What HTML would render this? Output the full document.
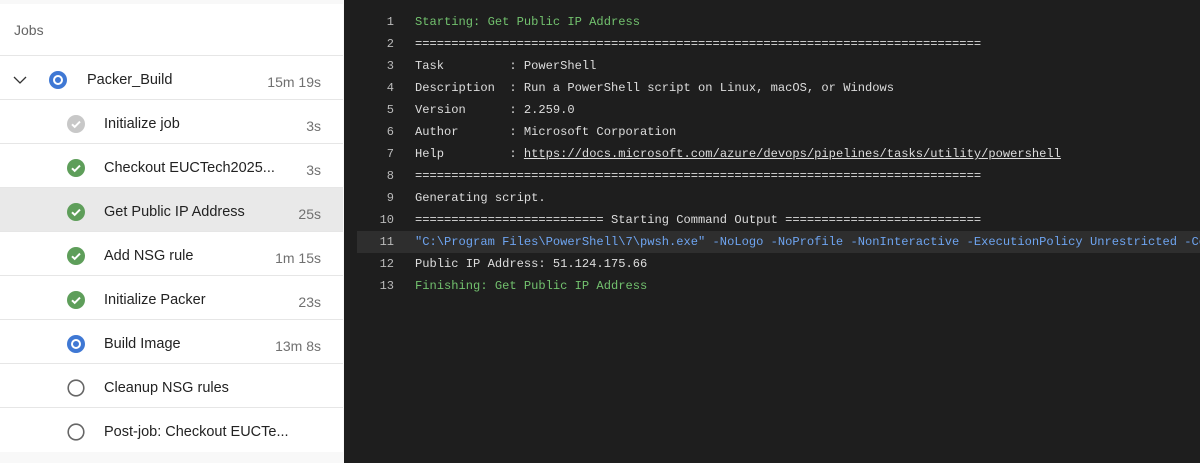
<!DOCTYPE html>
<html><head><style>
*{margin:0;padding:0;box-sizing:border-box}
body{width:1200px;height:463px;overflow:hidden;background:#1e1e1e;font-family:"Liberation Sans",sans-serif;position:relative}
#left{position:absolute;left:0;top:0;width:344px;height:463px;background:#f8f8f8}
#panel{position:absolute;left:0;top:4px;width:343px;height:448px;background:#fff}
.hdr{position:absolute;left:14px;top:18px;font-size:14px;color:#666}
.row{position:absolute;left:0;width:343px;height:44px;border-top:1px solid #e6e6e6}
.row .t{position:absolute;top:16px;font-size:14.5px;color:#222;white-space:nowrap}
.row .d{position:absolute;right:22px;top:18px;font-size:14px;color:#707070}
.ic{position:absolute;top:15px;width:18px;height:18px}
#code{position:absolute;left:344px;top:0;width:856px;height:463px;font-family:"Liberation Mono",monospace;font-size:12.1px;color:#ddd}
.l{position:absolute;left:0;height:22px;line-height:22px;width:856px;white-space:pre}
.n{position:absolute;width:50px;text-align:right;color:#bbb;font-size:12px}
.c{position:absolute;left:71px}
.g{color:#72c16e}.b{color:#6ea4f0}
</style></head><body>
<div id="left"><div id="panel">
<div class="hdr">Jobs</div>
</div></div>
<div style="position:absolute;left:0;top:55px">
<div class="row" style="top:0">
<svg class="ic" style="left:13px;top:18px;width:14px;height:12px" viewBox="0 0 14 12"><path d="M1 3l6 6 6-6" stroke="#333" stroke-width="1.3" fill="none"/></svg>
<svg class="ic" style="left:49px" viewBox="0 0 18 18"><circle cx="9" cy="9" r="9" fill="#3f78d4"/><circle cx="9" cy="9" r="4" stroke="#fff" stroke-width="2" fill="none"/></svg>
<span class="t" style="left:87px">Packer_Build</span><span class="d">15m 19s</span></div>
<div class="row" style="top:44px"><svg class="ic" style="left:67px" viewBox="0 0 18 18"><circle cx="9" cy="9" r="9" fill="#c8c8c8"/><path d="M5 9.3l2.7 2.6L13 6.6" stroke="#fff" stroke-width="2" fill="none"/></svg><span class="t" style="left:104px">Initialize job</span><span class="d">3s</span></div>
<div class="row" style="top:88px"><svg class="ic" style="left:67px" viewBox="0 0 18 18"><circle cx="9" cy="9" r="9" fill="#5e9e5a"/><path d="M5 9.3l2.7 2.6L13 6.6" stroke="#fff" stroke-width="2" fill="none"/></svg><span class="t" style="left:104px">Checkout EUCTech2025...</span><span class="d">3s</span></div>
<div class="row" style="top:132px;background:#e9e9e9"><svg class="ic" style="left:67px" viewBox="0 0 18 18"><circle cx="9" cy="9" r="9" fill="#5e9e5a"/><path d="M5 9.3l2.7 2.6L13 6.6" stroke="#fff" stroke-width="2" fill="none"/></svg><span class="t" style="left:104px">Get Public IP Address</span><span class="d">25s</span></div>
<div class="row" style="top:176px"><svg class="ic" style="left:67px" viewBox="0 0 18 18"><circle cx="9" cy="9" r="9" fill="#5e9e5a"/><path d="M5 9.3l2.7 2.6L13 6.6" stroke="#fff" stroke-width="2" fill="none"/></svg><span class="t" style="left:104px">Add NSG rule</span><span class="d">1m 15s</span></div>
<div class="row" style="top:220px"><svg class="ic" style="left:67px" viewBox="0 0 18 18"><circle cx="9" cy="9" r="9" fill="#5e9e5a"/><path d="M5 9.3l2.7 2.6L13 6.6" stroke="#fff" stroke-width="2" fill="none"/></svg><span class="t" style="left:104px">Initialize Packer</span><span class="d">23s</span></div>
<div class="row" style="top:264px"><svg class="ic" style="left:67px" viewBox="0 0 18 18"><circle cx="9" cy="9" r="9" fill="#3f78d4"/><circle cx="9" cy="9" r="4" stroke="#fff" stroke-width="2" fill="none"/></svg><span class="t" style="left:104px">Build Image</span><span class="d">13m 8s</span></div>
<div class="row" style="top:308px"><svg class="ic" style="left:67px" viewBox="0 0 18 18"><circle cx="9" cy="9" r="7.8" stroke="#666" stroke-width="1.6" fill="none"/></svg><span class="t" style="left:104px">Cleanup NSG rules</span></div>
<div class="row" style="top:352px"><svg class="ic" style="left:67px" viewBox="0 0 18 18"><circle cx="9" cy="9" r="7.8" stroke="#666" stroke-width="1.6" fill="none"/></svg><span class="t" style="left:104px">Post-job: Checkout EUCTe...</span></div>
</div>
<div id="code">
<div class="l" style="top:11px"><span class="n">1</span><span class="c g">Starting: Get Public IP Address</span></div>
<div class="l" style="top:33px"><span class="n">2</span><span class="c">==============================================================================</span></div>
<div class="l" style="top:55px"><span class="n">3</span><span class="c">Task         : PowerShell</span></div>
<div class="l" style="top:77px"><span class="n">4</span><span class="c">Description  : Run a PowerShell script on Linux, macOS, or Windows</span></div>
<div class="l" style="top:99px"><span class="n">5</span><span class="c">Version      : 2.259.0</span></div>
<div class="l" style="top:121px"><span class="n">6</span><span class="c">Author       : Microsoft Corporation</span></div>
<div class="l" style="top:143px"><span class="n">7</span><span class="c">Help         : <u>https://docs.microsoft.com/azure/devops/pipelines/tasks/utility/powershell</u></span></div>
<div class="l" style="top:165px"><span class="n">8</span><span class="c">==============================================================================</span></div>
<div class="l" style="top:187px"><span class="n">9</span><span class="c">Generating script.</span></div>
<div class="l" style="top:209px"><span class="n">10</span><span class="c">========================== Starting Command Output ===========================</span></div>
<div class="l" style="top:231px;left:13px;background:#2e2e2e;width:843px"><span class="n" style="left:-13px">11</span><span class="c b" style="left:58px">"C:\Program Files\PowerShell\7\pwsh.exe" -NoLogo -NoProfile -NonInteractive -ExecutionPolicy Unrestricted -Command</span></div>
<div class="l" style="top:253px"><span class="n">12</span><span class="c">Public IP Address: 51.124.175.66</span></div>
<div class="l" style="top:275px"><span class="n">13</span><span class="c g">Finishing: Get Public IP Address</span></div>
</div>
</body></html>
